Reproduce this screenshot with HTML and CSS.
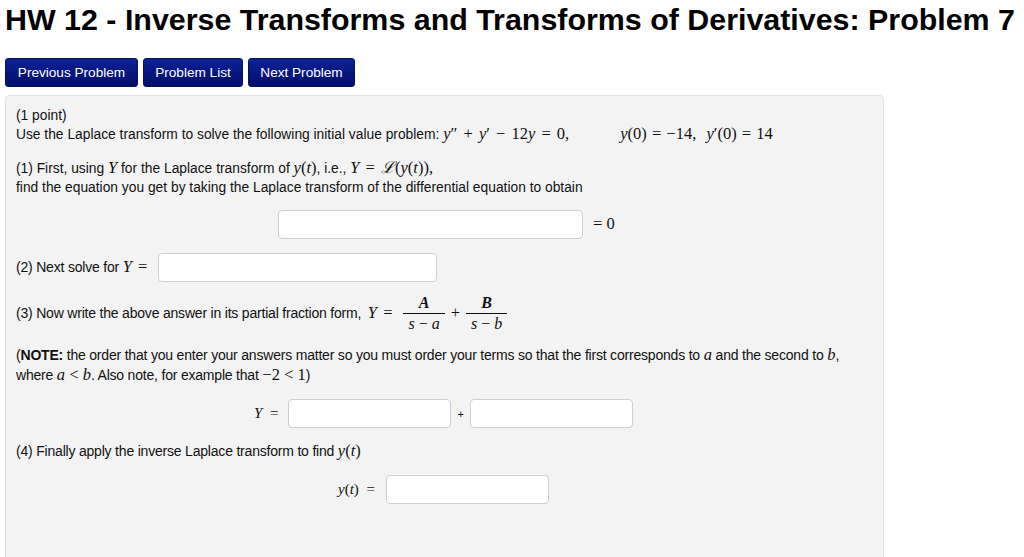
FILE: index.html
```html
<!DOCTYPE html>
<html>
<head>
<meta charset="utf-8">
<link rel="stylesheet" href="styles.css">
</head>
<body>
<h1 class="title">HW 12 - Inverse Transforms and Transforms of Derivatives: Problem 7</h1>
<div class="nav">
  <a class="btn btn-prev">Previous Problem</a>
  <a class="btn btn-list">Problem List</a>
  <a class="btn btn-next">Next Problem</a>
</div>
<div class="panel">
  <p class="line l-point">(1 point)</p>
  <p class="line l-use">Use the Laplace transform to solve the following initial value problem: <span class="m eq1"><i>y</i>″ + <i>y</i>′ − 12<i>y</i> = 0,</span><span class="m ic"><i>y</i>(0) = −14,&nbsp; <i>y</i>′(0) = 14</span></p>
  <p class="line l-first">(1) First, using <span class="m"><i>Y</i></span> for the Laplace transform of <span class="m"><i>y</i>(<i>t</i>)</span>, i.e., <span class="m sp"><i>Y</i> = <span class="cal">ℒ</span>(<i>y</i>(<i>t</i>)),</span></p>
  <p class="line l-find">find the equation you get by taking the Laplace transform of the differential equation to obtain</p>
  <div class="row r-eq">
    <span class="input w304"></span><span class="m after">= 0</span>
  </div>
  <div class="row r-solve">
    <span class="cond">(2) Next solve for <span class="m sp"><i>Y</i> =</span></span><span class="input w278"></span>
  </div>
  <div class="row r-partial">
    <span class="cond">(3) Now write the above answer in its partial fraction form, <span class="m sp"><i>Y</i> =</span></span>
    <span class="m frac"><span class="num"><i>A</i></span><span class="den"><i>s</i> − <i>a</i></span></span>
    <span class="m plus">+</span>
    <span class="m frac"><span class="num"><i>B</i></span><span class="den"><i>s</i> − <i>b</i></span></span>
  </div>
  <p class="line cond l-note">(<b>NOTE:</b> the order that you enter your answers matter so you must order your terms so that the first corresponds to <span class="m"><i>a</i></span> and the second to <span class="m"><i>b</i></span>,</p>
  <p class="line cond l-where">where <span class="m"><i>a</i> &lt; <i>b</i></span>. Also note, for example that <span class="m">−2 &lt; 1</span>)</p>
  <div class="row r-y">
    <span class="m lab"><i>Y</i> =</span><span class="input w162"></span><span class="pl">+</span><span class="input w162"></span>
  </div>
  <p class="line cond l-fin">(4) Finally apply the inverse Laplace transform to find <span class="m"><i>y</i>(<i>t</i>)</span></p>
  <div class="row r-yt">
    <span class="m lab"><i>y</i>(<i>t</i>) =</span><span class="input w162"></span>
  </div>
</div>
</body>
</html>
```
FILE: styles.css
```css
html, body {
  margin: 0;
  padding: 0;
  background: #ffffff;
  overflow: hidden;
}
body {
  width: 1024px;
  height: 557px;
  padding-left: 5px;
  box-sizing: border-box;
  font-family: "Liberation Sans", Arial, Helvetica, sans-serif;
  color: #111;
}
.title {
  margin: 0;
  padding-top: 2px;
  font-size: 30.4px;
  line-height: 34px;
  font-weight: bold;
  color: #000;
  white-space: nowrap;
}
.nav {
  display: flex;
  gap: 5px;
  margin-top: 22px;
}
.btn {
  display: block;
  height: 29px;
  line-height: 27px;
  box-sizing: border-box;
  border-radius: 3px;
  color: #fff;
  font-size: 13.6px;
  background: linear-gradient(#0c2296, #010d6c);
  border: 1px solid #061359;
  white-space: nowrap;
  text-align: center;
}
.btn-prev { width: 133px; }
.btn-list { width: 100px; }
.btn-next { width: 107px; }
.panel {
  margin-top: 8px;
  width: 879px;
  height: 480px;
  box-sizing: border-box;
  background: #f3f3f3;
  border: 1px solid #e0e0e0;
  border-radius: 4px;
  padding: 10px 10px;
  font-size: 13.8px;
}
.line {
  margin: 0;
  line-height: 19px;
  white-space: nowrap;
}
.m {
  font-family: "Liberation Serif", "Times New Roman", serif;
  font-size: 16.5px;
  line-height: 1;
  letter-spacing: 0;
}
.m i { font-style: italic; }
.cal { font-style: italic; }
.sp { word-spacing: 2px; }
.eq1 { word-spacing: 2px; }
.ic { margin-left: 51px; word-spacing: 1px; }
.l-first { margin-top: 15px; }
.row {
  display: flex;
  align-items: center;
  white-space: nowrap;
}
.input {
  display: block;
  height: 29px;
  box-sizing: border-box;
  background: #fff;
  border: 1px solid #cfcfcf;
  border-radius: 4px;
}
.w304 { width: 305px; }
.w278 { width: 279px; }
.w162 { width: 163px; }
.r-eq { margin-top: 13px; padding-left: 262px; }
.after { margin-left: 10px; }
.r-solve { margin-top: 14px; }
.r-solve .cond { margin-right: 11px; }
.cond { font-size: 14px; letter-spacing: -0.2px; }
.r-partial { margin-top: 12px; height: 38px; }
.r-partial .cond { margin-right: 11px; }
.r-partial .cond .m { margin-left: 3px; }
.frac {
  display: inline-flex;
  flex-direction: column;
  align-items: center;
  font-size: 16px;
}
.frac .num { font-weight: bold; padding-bottom: 1px; border-bottom: 1px solid #111; line-height: 18px; width: 100%; text-align: center; }
.frac .den { line-height: 19px; padding: 0 5px; }
.plus { margin: 0 6px; }
.l-note { margin-top: 14px; }
.l-where { margin-top: 1px; }
.r-y { margin-top: 14px; padding-left: 238px; }
.r-y .lab { margin-right: 9px; font-size: 15px; word-spacing: 4px; }
.pl { font-size: 11px; margin: 0 6px 0 7px; }
.l-fin { margin-top: 14px; }
.r-yt { margin-top: 14px; padding-left: 322px; }
.r-yt .lab { margin-right: 11px; font-size: 15px; word-spacing: 4px; }
```
